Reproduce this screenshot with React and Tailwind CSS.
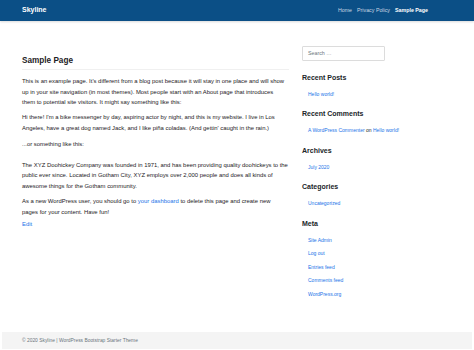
export default function App() {
  const font = { fontFamily: '"Liberation Sans", Arial, sans-serif' };
  const widgets = [
    { title: "Recent Posts", items: [<a className="text-[#1a73e8]">Hello world!</a>] },
    {
      title: "Recent Comments",
      items: [
        <span>
          <a className="text-[#1a73e8]">A WordPress Commenter</a> on{" "}
          <a className="text-[#1a73e8]">Hello world!</a>
        </span>,
      ],
    },
    { title: "Archives", items: [<a className="text-[#1a73e8]">July 2020</a>] },
    { title: "Categories", items: [<a className="text-[#1a73e8]">Uncategorized</a>] },
  ];
  const meta = ["Site Admin", "Log out", "Entries feed", "Comments feed", "WordPress.org"];

  return (
    <div className="w-[474px] h-[350px] bg-white text-[#212529] overflow-hidden flex flex-col" style={font}>
      {/* navbar */}
      <header className="h-[21px] bg-[#0b4f86] shadow-[0_1px_2px_rgba(0,0,0,0.15)] flex items-center justify-between pl-[22px] pr-[46px] shrink-0">
        <span className="text-white font-bold text-[7px]">Skyline</span>
        <nav className="flex gap-[5px] text-[5.3px]">
          <a className="text-[#c9d6e3]">Home</a>
          <a className="text-[#c9d6e3]">Privacy Policy</a>
          <a className="text-white font-bold">Sample Page</a>
        </nav>
      </header>

      <div className="flex flex-1 pl-[22px] pt-[25px]">
        {/* content */}
        <main className="w-[267px] shrink-0 pt-[10px] text-[5.9px] leading-[10.5px] text-[#1d2125]">
          <h1 className="text-[8.2px] font-bold leading-[10px] pb-[3px] border-b border-[#f0f0f0]">Sample Page</h1>
          <p className="mt-[6px] whitespace-nowrap">
            This is an example page. It's different from a blog post because it will stay in one place and will show
            <br />
            up in your site navigation (in most themes). Most people start with an About page that introduces
            <br />
            them to potential site visitors. It might say something like this:
          </p>
          <p className="mt-[4.5px] whitespace-nowrap">
            Hi there! I'm a bike messenger by day, aspiring actor by night, and this is my website. I live in Los
            <br />
            Angeles, have a great dog named Jack, and I like piña coladas. (And gettin' caught in the rain.)
          </p>
          <p className="mt-[5.5px]">...or something like this:</p>
          <p className="mt-[10.5px] whitespace-nowrap">
            The XYZ Doohickey Company was founded in 1971, and has been providing quality doohickeys to the
            <br />
            public ever since. Located in Gotham City, XYZ employs over 2,000 people and does all kinds of
            <br />
            awesome things for the Gotham community.
          </p>
          <p className="mt-[5px] whitespace-nowrap">
            As a new WordPress user, you should go to <a className="text-[#1a73e8]">your dashboard</a> to delete this page and create new
            <br />
            pages for your content. Have fun!
          </p>
          <a className="block mt-[2px] text-[#1a73e8]">Edit</a>
        </main>

        {/* sidebar */}
        <aside className="ml-[13px] w-[83px]">
          <div className="h-[15px] border border-[#dcdcdc] rounded-[1px] flex items-center px-[5px] text-[5.3px] text-[#6c757d]">
            Search …
          </div>
          {widgets.map((w, idx) => (
            <section key={w.title} className={idx === 0 ? "mt-[11.5px]" : "mt-[10.5px]"}>
              <h2 className="text-[7px] font-bold leading-[9px]">{w.title}</h2>
              <ul className="pl-[6px] mt-[7px] text-[5px] leading-[10px]">
                {w.items.map((it, i) => (
                  <li key={i} className="whitespace-nowrap">{it}</li>
                ))}
              </ul>
            </section>
          ))}
          <section className="mt-[10.5px]">
            <h2 className="text-[7px] font-bold leading-[9px]">Meta</h2>
            <ul className="pl-[6px] mt-[7px] text-[5px] leading-[10px] flex flex-col gap-[3.5px]">
              {meta.map((m) => (
                <li key={m}>
                  <a className="text-[#1a73e8]">{m}</a>
                </li>
              ))}
            </ul>
          </section>
        </aside>
      </div>

      <footer className="mx-[2px] h-[17px] bg-[#f4f4f4] flex items-center pl-[20px] text-[4.9px] text-[#6c757d] shrink-0 mb-[1px]">
        © 2020 Skyline | WordPress Bootstrap Starter Theme
      </footer>
    </div>
  );
}
